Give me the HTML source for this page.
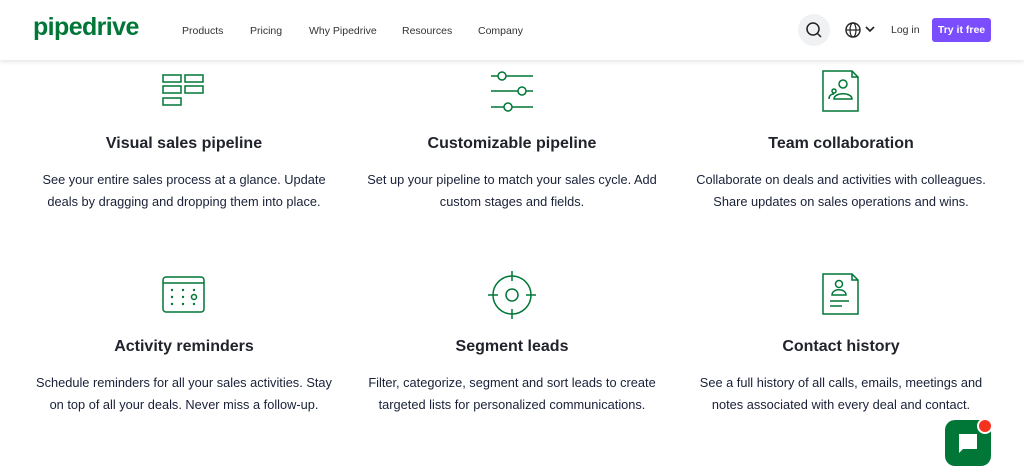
<!DOCTYPE html>
<html><head><style>
*{margin:0;padding:0;box-sizing:border-box}
body{width:1024px;height:475px;overflow:hidden;background:#fff;font-family:"Liberation Sans",Arial,sans-serif;color:#192038;position:relative}
.hdr{position:absolute;top:0;left:0;width:1024px;height:60px;background:#fff;box-shadow:0 2px 4px rgba(0,0,0,.1);z-index:2}
.logo{position:absolute;left:33px;top:13px;font-size:25px;font-weight:bold;color:#017737;letter-spacing:-.6px}
.nav a{position:absolute;top:25px;font-size:10.5px;color:#333;text-decoration:none}
.srch{position:absolute;left:798px;top:14px;width:32px;height:32px;border-radius:50%;background:#f0f1f3}
.login{position:absolute;left:891px;top:24px;font-size:10.5px;color:#333}
.try{position:absolute;left:932px;top:18px;width:59px;height:24px;background:#7a4dff;border-radius:3px;color:#fff;font-size:10.5px;font-weight:bold;text-align:center;line-height:24px}
.f{position:absolute;width:304px;text-align:center}
.f h3{font-size:16px;font-weight:bold;color:#21232c;position:absolute;top:1px;width:100%}
.f p{font-size:12.8px;line-height:21.5px;color:#192038;position:absolute;top:35px;width:100%}
svg.i{position:absolute}
.chat{position:absolute;left:945px;top:420px;width:46px;height:46px;border-radius:10px;background:#017737}
.dot{position:absolute;left:977px;top:418px;width:16px;height:16px;border-radius:50%;background:#f5321e;border:2px solid #fff}
</style></head><body>
<div class="hdr">
<div class="logo">pipedrive</div>
<div class="nav"><a style="left:182px">Products</a><a style="left:250px">Pricing</a><a style="left:309px">Why Pipedrive</a><a style="left:402px">Resources</a><a style="left:478px">Company</a></div>
<div class="srch"><svg width="32" height="32"><circle cx="15" cy="15" r="6" fill="none" stroke="#222" stroke-width="1.5"/><line x1="19.5" y1="19.5" x2="23" y2="23" stroke="#222" stroke-width="1.5"/></svg></div>
<svg style="position:absolute;left:844px;top:21px" width="34" height="18"><circle cx="9" cy="9" r="7" fill="none" stroke="#222" stroke-width="1.4"/><ellipse cx="9" cy="9" rx="3" ry="7" fill="none" stroke="#222" stroke-width="1.2"/><line x1="2" y1="9" x2="16" y2="9" stroke="#222" stroke-width="1.2"/><path d="M22 6l4 4 4-4" fill="none" stroke="#222" stroke-width="1.6"/></svg>
<div class="login">Log in</div>
<div class="try">Try it free</div>
</div>

<svg class="i" style="left:158px;top:72px" width="50" height="38" fill="none" stroke="#017737" stroke-width="1.5"><rect x="5" y="3" width="18" height="7"/><rect x="27" y="3" width="18" height="7"/><rect x="5" y="14" width="18" height="7"/><rect x="27" y="14" width="18" height="7"/><rect x="5" y="26" width="18" height="7"/></svg>
<svg class="i" style="left:488px;top:68px" width="48" height="46" fill="none" stroke="#017737" stroke-width="1.5"><line x1="3" y1="8" x2="45" y2="8"/><line x1="3" y1="23" x2="45" y2="23"/><line x1="3" y1="39" x2="45" y2="39"/><circle cx="14" cy="8" r="4" fill="#fff"/><circle cx="34" cy="23" r="4" fill="#fff"/><circle cx="20" cy="39" r="4" fill="#fff"/></svg>
<svg class="i" style="left:822px;top:70px" width="38" height="42" fill="none" stroke="#017737" stroke-width="1.5"><path d="M1 1h29l6 6v34H1z"/><path d="M30 1v6h6"/><circle cx="21" cy="14" r="4"/><path d="M12 29c0-7 18-7 18 0z"/><circle cx="12" cy="21" r="2"/><path d="M7 29c0-4 3-5 5-5"/></svg>

<svg class="i" style="left:162px;top:276px" width="44" height="38" fill="none" stroke="#017737" stroke-width="1.5"><rect x="1" y="1" width="41" height="35" rx="3"/><line x1="1" y1="7" x2="42" y2="7"/><g fill="#017737" stroke="none"><circle cx="10" cy="14" r="1.2"/><circle cx="21" cy="14" r="1.2"/><circle cx="32" cy="14" r="1.2"/><circle cx="10" cy="21" r="1.2"/><circle cx="21" cy="21" r="1.2"/><circle cx="10" cy="28" r="1.2"/><circle cx="21" cy="28" r="1.2"/><circle cx="32" cy="28" r="1.2"/></g><circle cx="32" cy="21" r="2.5"/></svg>
<svg class="i" style="left:487px;top:270px" width="50" height="50" fill="none" stroke="#017737" stroke-width="1.5"><circle cx="25" cy="25" r="19"/><circle cx="25" cy="25" r="6"/><line x1="25" y1="1" x2="25" y2="11"/><line x1="25" y1="39" x2="25" y2="49"/><line x1="1" y1="25" x2="11" y2="25"/><line x1="39" y1="25" x2="49" y2="25"/></svg>
<svg class="i" style="left:822px;top:273px" width="38" height="42" fill="none" stroke="#017737" stroke-width="1.5"><path d="M1 1h29l6 6v34H1z"/><path d="M30 1v6h6"/><circle cx="17" cy="11" r="3.5"/><path d="M10 22c0-7 14-7 14 0z"/><line x1="8" y1="28" x2="27" y2="28"/><line x1="8" y1="33" x2="20" y2="33"/></svg>

<div class="f" style="left:32px;top:134px"><h3>Visual sales pipeline</h3><p>See your entire sales process at a glance. Update deals by dragging and dropping them into place.</p></div>
<div class="f" style="left:360px;top:134px"><h3>Customizable pipeline</h3><p>Set up your pipeline to match your sales cycle. Add custom stages and fields.</p></div>
<div class="f" style="left:689px;top:134px"><h3>Team collaboration</h3><p>Collaborate on deals and activities with colleagues. Share updates on sales operations and wins.</p></div>
<div class="f" style="left:32px;top:337px"><h3>Activity reminders</h3><p>Schedule reminders for all your sales activities. Stay on top of all your deals. Never miss a follow-up.</p></div>
<div class="f" style="left:360px;top:337px"><h3>Segment leads</h3><p>Filter, categorize, segment and sort leads to create targeted lists for personalized communications.</p></div>
<div class="f" style="left:689px;top:337px"><h3>Contact history</h3><p>See a full history of all calls, emails, meetings and notes associated with every deal and contact.</p></div>

<div class="chat"><svg width="46" height="46"><path d="M14 14h18v15H18l-4 4z" fill="#fff"/></svg></div>
<div class="dot"></div>
</body></html>
